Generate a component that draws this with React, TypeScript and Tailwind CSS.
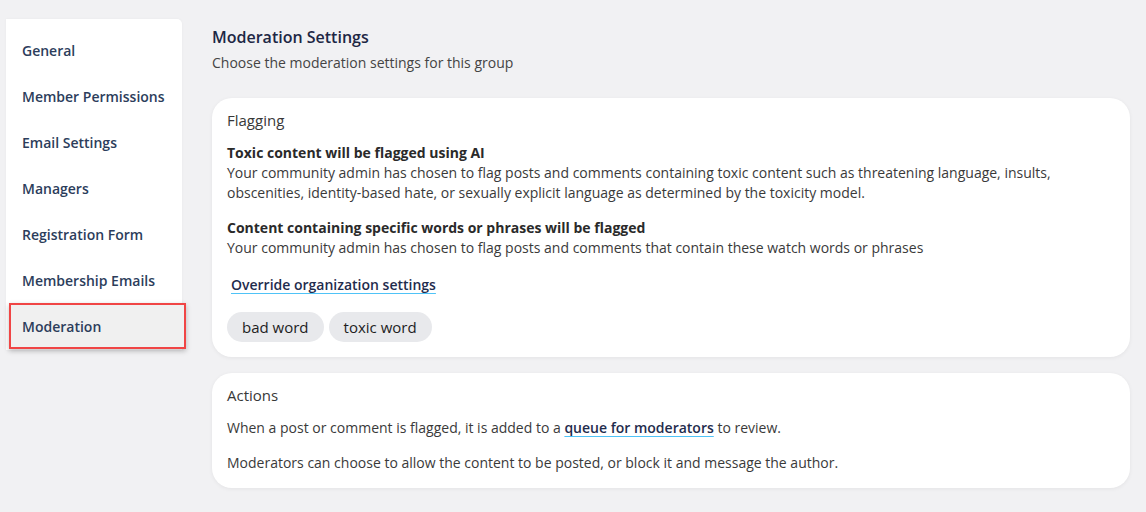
import React from "react";

const items = [
  "General",
  "Member Permissions",
  "Email Settings",
  "Managers",
  "Registration Form",
  "Membership Emails",
];

export default function App() {
  return (
    <div
      className="w-[1146px] h-[512px] bg-[#f1f1f3] flex items-start overflow-hidden"
      style={{ fontFamily: '"Open Sans", sans-serif' }}
    >
      <aside className="ml-[6px] mt-[19px] w-[176px] bg-white rounded-tr-[5px] shadow-[0_0_3px_rgba(0,0,0,0.04)] flex flex-col pt-[8px] pb-[1px]">
        {items.map((t) => (
          <div
            key={t}
            className="h-[46px] flex items-center pl-[16px] text-[14px] font-semibold text-[#2c3d5b]"
          >
            {t}
          </div>
        ))}
        <div className="relative w-[177px] ml-[3px] h-[46px] flex items-center pl-[11px] text-[14px] font-semibold text-[#2c3d5b] bg-[#f0f0f0] border-2 border-[#f04545] shadow-[0_2px_5px_rgba(0,0,0,0.25)]">
          Moderation
        </div>
      </aside>

      <main className="ml-[30px] w-[918px] pt-[26px] flex flex-col">
        <h1 className="text-[16px] leading-[22px] font-semibold text-[#1d2744]">
          Moderation Settings
        </h1>
        <p className="mt-[5px] text-[14px] leading-[20px] text-[#444]">
          Choose the moderation settings for this group
        </p>

        <section className="mt-[25px] bg-white rounded-[20px] shadow-[0_1px_4px_rgba(0,0,0,0.06)] px-[15px] pt-[11px] pb-[15px] text-[#333]">
          <div className="text-[15px] leading-[22px] text-[#383838]">Flagging</div>
          <div className="mt-[12px] text-[14px] leading-[20px]">
            <div className="font-bold text-[#2a2a2a]">Toxic content will be flagged using AI</div>
            <div className="text-[#3a3a3a]">
              Your community admin has chosen to flag posts and comments containing toxic content such as threatening language, insults, obscenities, identity-based hate, or sexually explicit language as determined by the toxicity model.
            </div>
          </div>
          <div className="mt-[15px] text-[14px] leading-[20px]">
            <div className="font-bold text-[#2a2a2a]">Content containing specific words or phrases will be flagged</div>
            <div className="text-[#3a3a3a]">
              Your community admin has chosen to flag posts and comments that contain these watch words or phrases
            </div>
          </div>
          <div className="mt-[17px] ml-[4px] text-[14px] leading-[20px]">
            <span className="font-semibold text-[#1f2c4d] underline decoration-[#4fc3f7] underline-offset-[3px]">
              Override organization settings
            </span>
          </div>
          <div className="mt-[17px] flex gap-[5px]">
            <span className="h-[30px] px-[15px] flex items-center rounded-full bg-[#e8e9ec] text-[15px] text-[#1e1e1e]">
              bad word
            </span>
            <span className="h-[30px] px-[15px] flex items-center rounded-full bg-[#e8e9ec] text-[15px] text-[#1e1e1e]">
              toxic word
            </span>
          </div>
        </section>

        <section className="mt-[16px] bg-white rounded-[20px] shadow-[0_1px_4px_rgba(0,0,0,0.06)] px-[15px] pt-[11px] pb-[15px] text-[#3a3a3a]">
          <div className="text-[15px] leading-[22px] text-[#383838]">Actions</div>
          <p className="mt-[12px] text-[14px] leading-[20px]">
            When a post or comment is flagged, it is added to a{" "}
            <span className="font-semibold text-[#1f2c4d] underline decoration-[#4fc3f7] underline-offset-[3px]">
              queue for moderators
            </span>{" "}
            to review.
          </p>
          <p className="mt-[15px] text-[14px] leading-[20px]">
            Moderators can choose to allow the content to be posted, or block it and message the author.
          </p>
        </section>
      </main>
    </div>
  );
}
